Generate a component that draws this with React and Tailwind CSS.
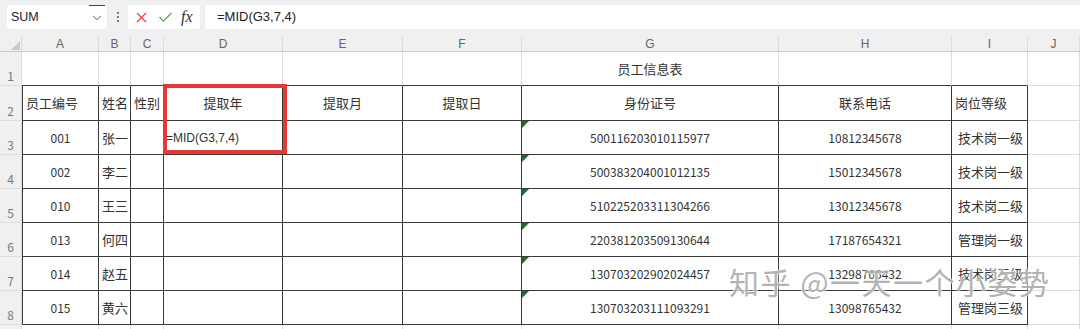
import { ChevronDown, X, Check } from 'lucide-react'

const COLS = [
  { key: 'A', w: 'w-[77px]' },
  { key: 'B', w: 'w-[32px]' },
  { key: 'C', w: 'w-[33px]' },
  { key: 'D', w: 'w-[119px]' },
  { key: 'E', w: 'w-[120px]' },
  { key: 'F', w: 'w-[119px]' },
  { key: 'G', w: 'w-[257px]' },
  { key: 'H', w: 'w-[173px]' },
  { key: 'I', w: 'w-[76px]' },
  { key: 'J', w: 'w-[52px]' },
]

const HEADERS = ['员工编号', '姓名', '性别', '提取年', '提取月', '提取日', '身份证号', '联系电话', '岗位等级']

const PEOPLE = [
  ['001', '张一', '500116203010115977', '10812345678', '技术岗一级'],
  ['002', '李二', '500383204001012135', '15012345678', '技术岗一级'],
  ['010', '王三', '510225203311304266', '13012345678', '技术岗二级'],
  ['013', '何四', '220381203509130644', '17187654321', '管理岗一级'],
  ['014', '赵五', '130703202902024457', '13298765432', '技术岗三级'],
  ['015', '黄六', '130703203111093291', '13098765432', '管理岗三级'],
]

const FONT = "font-['Noto_Sans_CJK_SC','Noto_Sans',sans-serif]"

function RowHead({ n }) {
  return (
    <div className="w-[22px] shrink-0 h-full bg-[#f0f0f0] border-r border-b border-[#dcdcdc] flex items-end justify-center pb-[3px] text-[12px] text-[#7a7a7a] leading-none">
      {n}
    </div>
  )
}

function Cell({ w, dark, darkBottom, left, align = 'center', children, className = '' }) {
  const bottom = dark || darkBottom ? 'border-b-[#3a3a3a]' : 'border-b-[#dcdcdc]'
  const right = dark ? 'border-r-[#3a3a3a]' : 'border-r-[#dcdcdc]'
  const justify = align === 'left' ? 'justify-start pl-[3px]' : 'justify-center'
  return (
    <div
      className={`${w} shrink-0 h-full box-border border-r border-b ${bottom} ${right} ${
        left ? 'border-l border-l-[#3a3a3a]' : ''
      } flex items-center ${justify} text-[#333] whitespace-nowrap relative ${className}`}
    >
      {children}
    </div>
  )
}

function GreenFlag() {
  return (
    <svg className="absolute left-0 top-0" width="7" height="7" viewBox="0 0 7 7">
      <polygon points="0,0 7,0 0,7" fill="#1e6b34" />
    </svg>
  )
}

function FormulaBar() {
  return (
    <div className="h-[36px] bg-[#f0f0f0] flex items-start pt-[5px] pl-[7px] gap-0">
      <div className="w-[100px] h-[24px] bg-white rounded-[3px] flex items-center justify-between pl-[4px] pr-[2px] relative">
        <span className="text-[12.5px] text-[#222] font-['Liberation_Sans',sans-serif]">SUM</span>
        <span className="h-[24px] w-[16px] flex items-center justify-center border-t border-[#444]">
          <ChevronDown size={14} strokeWidth={1.6} color="#555" />
        </span>
      </div>
      <div className="w-[21px] h-[24px] flex flex-col items-center justify-center gap-[2px]">
        <span className="w-[2px] h-[2px] bg-[#555] rounded-full" />
        <span className="w-[2px] h-[2px] bg-[#555] rounded-full" />
        <span className="w-[2px] h-[2px] bg-[#555] rounded-full" />
      </div>
      <div className="w-[72px] h-[24px] bg-white rounded-[3px] flex items-center justify-around px-[2px]">
        <X size={17} strokeWidth={1.6} color="#e0403a" />
        <Check size={17} strokeWidth={1.6} color="#4f9e5a" />
        <span className="text-[16px] italic text-[#333] font-['Liberation_Serif',serif] leading-none pr-[2px]">
          fx
        </span>
      </div>
      <div className="ml-[5px] flex-1 h-[24px] bg-white flex items-center pl-[12px] text-[13px] text-[#222] font-['Liberation_Sans',sans-serif]">
        =MID(G3,7,4)
      </div>
    </div>
  )
}

function ColumnHeader() {
  return (
    <div className="flex h-[16px] bg-[#f0f0f0] border-b border-[#c8c8c8]">
      <div className="w-[22px] shrink-0 flex items-end justify-end pr-[1px] pb-[1px] border-r border-[#dcdcdc]">
        <svg width="9" height="9" viewBox="0 0 9 9">
          <polygon points="9,0 9,9 0,9" fill="#c9c9c9" />
        </svg>
      </div>
      {COLS.map((c) => (
        <div
          key={c.key}
          className={`${c.w} shrink-0 box-border border-r border-[#dcdcdc] flex items-center justify-center text-[12px] text-[#666] font-['Liberation_Sans',sans-serif] leading-none`}
        >
          {c.key}
        </div>
      ))}
    </div>
  )
}

export default function App() {
  return (
    <div className={`w-[1080px] h-[329px] overflow-hidden bg-white ${FONT}`}>
      <FormulaBar />
      <ColumnHeader />
      <div className="relative">
        {/* row 1: title */}
        <div className="flex h-[34px]">
          <RowHead n={1} />
          {COLS.map((c, i) => (
            <Cell key={c.key} w={c.w} darkBottom={i < 9} className="text-[13px]">
              {c.key === 'G' ? '员工信息表' : null}
            </Cell>
          ))}
        </div>

        {/* row 2: headers */}
        <div className="flex h-[35px]">
          <RowHead n={2} />
          {COLS.map((c, i) => {
            if (i === 9) return <Cell key={c.key} w={c.w} />
            const left = i === 0 || i === 1 || i === 2 || i === 8
            return (
              <Cell key={c.key} w={c.w} dark left={i === 0} align={left ? 'left' : 'center'} className="text-[13px]">
                {HEADERS[i]}
                {c.key === 'D' && (
                  <div className="absolute -left-px top-[-2px] w-[124px] h-[70px] border-[4px] border-[#e53935] z-10 pointer-events-none" />
                )}
              </Cell>
            )
          })}
        </div>

        {/* data rows */}
        {PEOPLE.map((p, r) => (
          <div key={p[0]} className="flex h-[34px]">
            <RowHead n={r + 3} />
            <Cell w={COLS[0].w} dark left className="text-[12px]">
              {p[0]}
            </Cell>
            <Cell w={COLS[1].w} dark align="left" className="text-[13px]">
              {p[1]}
            </Cell>
            <Cell w={COLS[2].w} dark />
            <Cell w={COLS[3].w} dark align="left" className="text-[12px] font-['Liberation_Sans',sans-serif]">
              {r === 0 ? <span className="-ml-[1px]">=MID(G3,7,4)</span> : null}
            </Cell>
            <Cell w={COLS[4].w} dark />
            <Cell w={COLS[5].w} dark />
            <Cell w={COLS[6].w} dark className="text-[12px]">
              <GreenFlag />
              {p[2]}
            </Cell>
            <Cell w={COLS[7].w} dark className="text-[12px]">
              {p[3]}
            </Cell>
            <Cell w={COLS[8].w} dark align="left" className="text-[13px] pl-[6px]">
              {p[4]}
            </Cell>
            <Cell w={COLS[9].w} />
          </div>
        ))}

        {/* row 9, only its top edge is in view */}
        <div className="flex h-[34px]">
          <RowHead n={null} />
          {COLS.map((c) => (
            <Cell key={c.key} w={c.w} />
          ))}
        </div>

        {/* watermark */}
        <div className="absolute left-[729px] top-[214px] text-[30px] leading-none tracking-[1.5px] text-[#9a9a9a]/75 whitespace-nowrap pointer-events-none [text-shadow:0_0_2px_#fff,0_0_3px_#fff]">
          知乎 @一天一个小姿势
        </div>
      </div>
    </div>
  )
}
